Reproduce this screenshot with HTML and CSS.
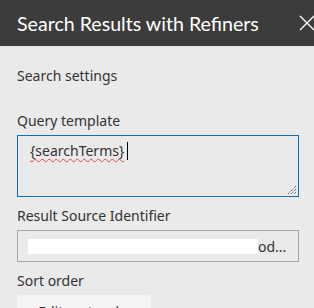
FILE: index.html
```html
<!DOCTYPE html>
<html lang="en">
<head>
  <meta charset="UTF-8" />
  <meta name="viewport" content="width=device-width, initial-scale=1.0"/>
  <title>Search Results with Refiners</title>
  <link rel="stylesheet" href="styles.css">
</head>
<body>
  <div class="panel">
    <div class="panel-header">
      <h1>Search Results with Refiners</h1>
      <button class="close-btn" aria-label="Close">
        <svg width="16" height="16" viewBox="0 0 16 16">
          <path d="M1 1 L15 15 M15 1 L1 15" stroke="#fff" stroke-width="1.4" fill="none"/>
        </svg>
      </button>
    </div>

    <div class="panel-body">
      <p class="group-title">Search settings</p>

      <div class="field">
        <label class="field-label">Query template</label>
        <div class="textarea">
          <span class="misspelled">{searchTerms}</span><span class="caret"></span>
          <svg class="grip" width="10" height="10" viewBox="0 0 10 10">
            <path d="M9 1 L1 9 M9 4 L4 9 M9 7 L7 9" stroke="#444" stroke-width="1" stroke-dasharray="1 1" fill="none"/>
          </svg>
        </div>
      </div>

      <div class="field">
        <label class="field-label">Result Source Identifier</label>
        <div class="text-input">
          <span class="redacted"></span><span class="value">od...</span>
        </div>
      </div>

      <div class="field">
        <label class="field-label">Sort order</label>
        <button class="default-btn">Edit sort order</button>
      </div>
    </div>
  </div>
</body>
</html>
```

FILE: styles.css
```css
body {
  margin: 0;
  background: #eaeaea;
  font-family: "Noto Sans", "Open Sans", sans-serif;
  color: #333;
  overflow: hidden;
}

.panel-header {
  height: 46px;
  background: #3c3c3c;
  display: flex;
  align-items: center;
  justify-content: space-between;
  padding-left: 17px;
}

.panel-header h1 {
  margin: 0;
  font-family: Lato, "Noto Sans", sans-serif;
  font-size: 19.6px;
  font-weight: 400;
  color: #fff;
  white-space: nowrap;
}

.close-btn {
  background: none;
  border: none;
  padding: 0;
  margin-right: -1px;
  width: 16px;
  height: 16px;
  margin-top: -1px;
}

.panel-body {
  padding: 20px 15px 0 17px;
}

.group-title {
  margin: 0 0 25px;
  font-size: 14px;
  line-height: 20px;
}

.field {
  margin-bottom: 9px;
}

.field-label {
  display: block;
  font-size: 14px;
  line-height: 20px;
  margin-bottom: 4px;
}

.textarea {
  position: relative;
  height: 48px;
  border: 1px solid #106ebe;
  padding: 6px 12px;
  font-size: 14px;
  line-height: 17px;
  color: #333;
}

.misspelled {
  text-decoration: underline wavy #e0474f;
  text-decoration-thickness: 1px;
  text-underline-offset: 2px;
}

.caret {
  display: inline-block;
  width: 1px;
  height: 18px;
  background: #000;
  margin-left: 3px;
  vertical-align: top;
}

.grip {
  position: absolute;
  right: 1px;
  bottom: 1px;
}

.text-input {
  height: 30px;
  border: 1px solid #a6a6a6;
  display: flex;
  align-items: center;
  padding-left: 10px;
  font-size: 14px;
}

.redacted {
  width: 230px;
  height: 15px;
  background: #fff;
}

.default-btn {
  width: 134px;
  height: 32px;
  border: none;
  background: #f4f4f4;
  font-family: inherit;
  font-size: 14px;
  color: #333;
  padding: 0 0 0 3px;
}
```
